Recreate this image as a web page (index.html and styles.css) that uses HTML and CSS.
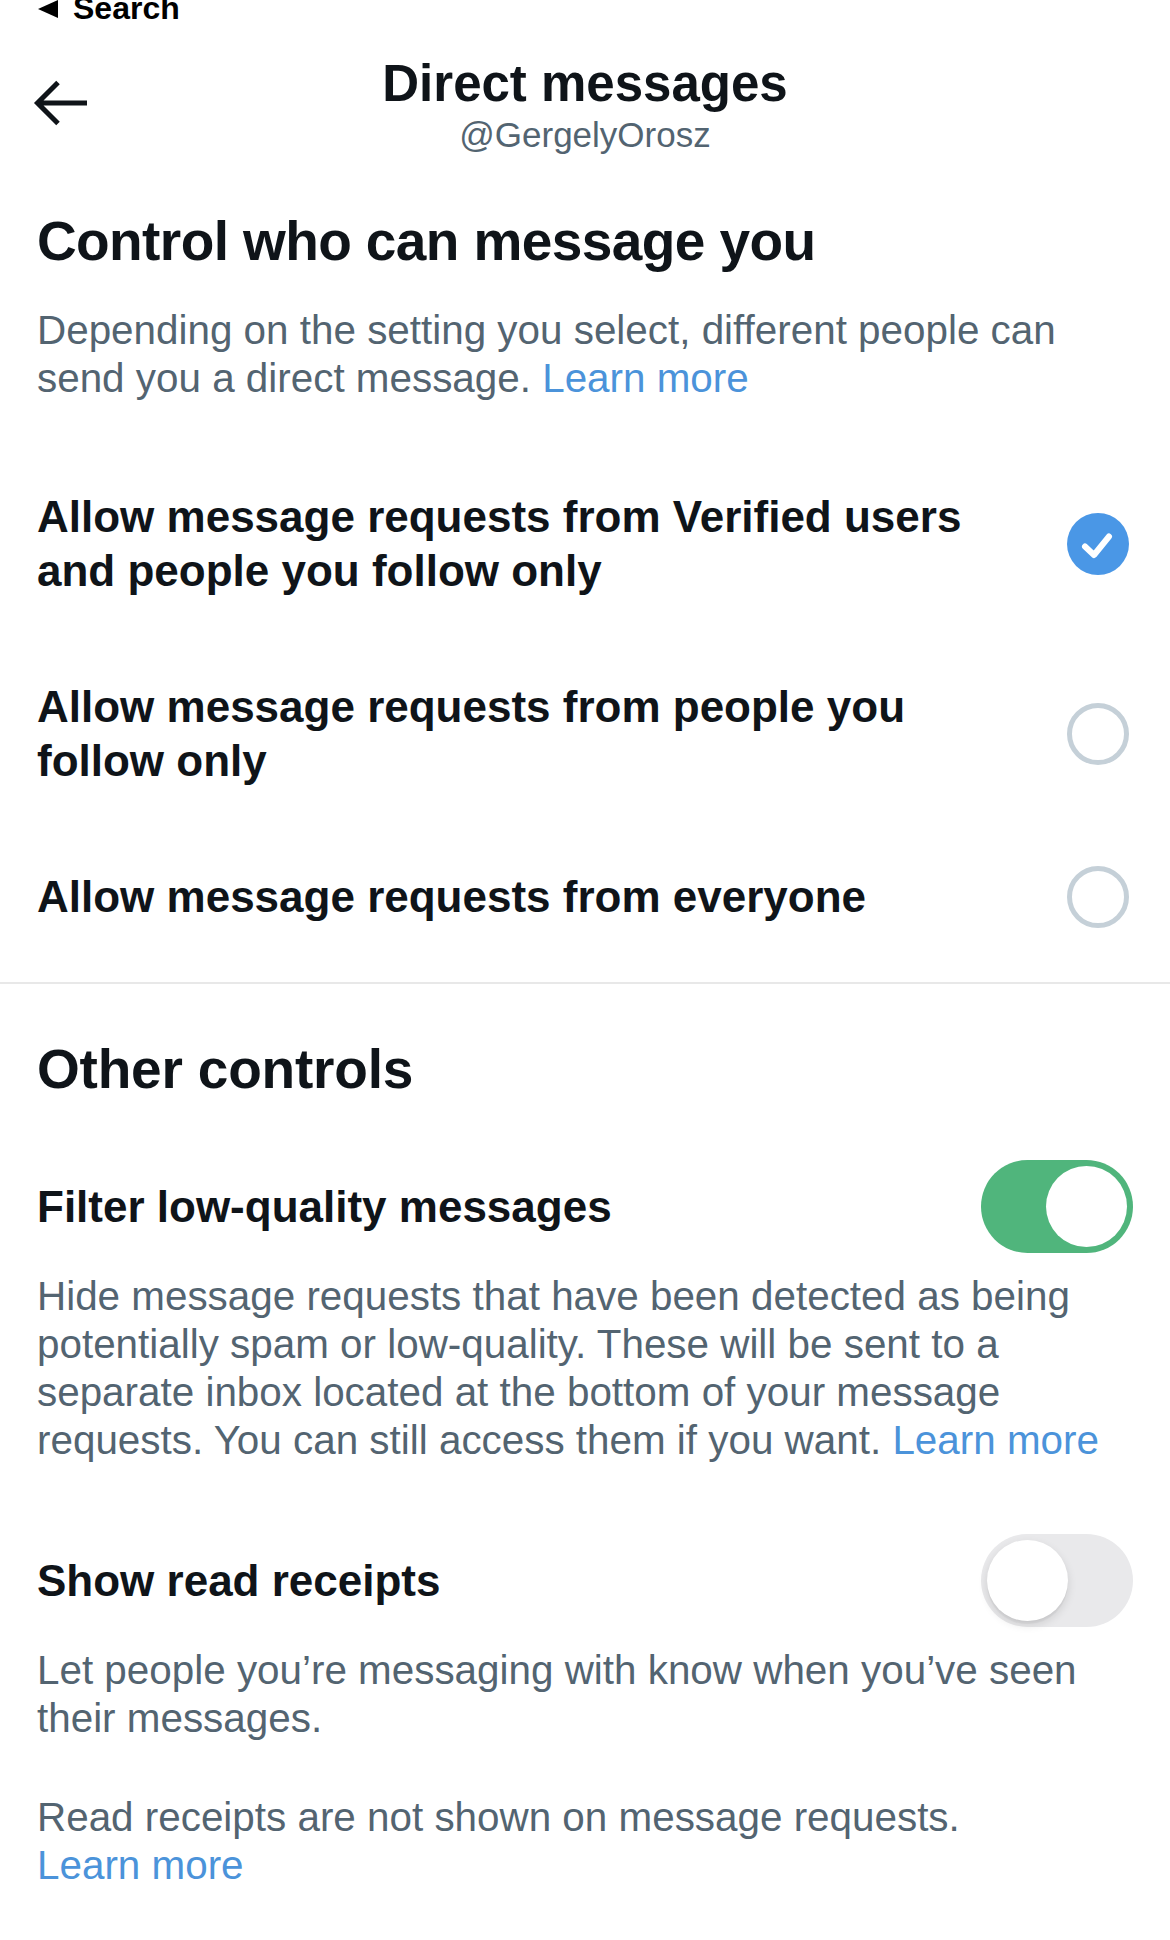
FILE: index.html
```
<!DOCTYPE html>
<html lang="en">
<head>
<meta charset="utf-8">
<title>Direct messages</title>
<link rel="stylesheet" href="styles.css">
</head>
<body>
<div class="statusbar">
  <svg class="sb-back" width="22" height="18" viewBox="0 0 22 18"><path d="M1 9 L21 0 L21 18 Z" fill="#000"/></svg>
  <span class="sb-label">Search</span>
</div>
<header class="nav">
  <div class="nav-left">
    <svg class="back-arrow" width="56" height="48" viewBox="0 0 56 48"><path d="M54 24 H5 M25 3.5 L4.5 24 L25 44.5" fill="none" stroke="#0f1419" stroke-width="5" stroke-linejoin="miter"/></svg>
  </div>
  <div class="nav-center">
    <h1 class="nav-title">Direct messages</h1>
    <div class="nav-handle">@GergelyOrosz</div>
  </div>
  <div class="nav-right"></div>
</header>
<main>
  <section class="group">
    <h2 class="section-title">Control who can message you</h2>
    <p class="desc desc--intro">Depending on the setting you select, different people can send you a direct message. <a class="link">Learn more</a></p>
  </section>
  <ul class="options">
    <li class="option">
      <span class="option-label">Allow message requests from Verified users and people you follow only</span>
      <svg class="radio" width="62" height="62" viewBox="0 0 62 62"><circle cx="31" cy="31" r="31" fill="#4a97e6"/><path d="M18 33.5 L27 42 L42 23.5" fill="none" stroke="#fff" stroke-width="6" stroke-linecap="round" stroke-linejoin="round"/></svg>
    </li>
    <li class="option">
      <span class="option-label">Allow message requests from people you follow only</span>
      <svg class="radio" width="62" height="62" viewBox="0 0 62 62"><circle cx="31" cy="31" r="28.5" fill="none" stroke="#c5d0d8" stroke-width="5"/></svg>
    </li>
    <li class="option option--last">
      <span class="option-label">Allow message requests from everyone</span>
      <svg class="radio" width="62" height="62" viewBox="0 0 62 62"><circle cx="31" cy="31" r="28.5" fill="none" stroke="#c5d0d8" stroke-width="5"/></svg>
    </li>
  </ul>
  <hr class="divider">
  <section class="group">
    <h2 class="section-title section-title--other">Other controls</h2>
    <div class="setting-row setting-row--first">
      <span class="setting-label">Filter low-quality messages</span>
      <span class="switch switch--on"><span class="knob"></span></span>
    </div>
    <p class="desc desc--after-row">Hide message requests that have been detected as being potentially spam or low-quality. These will be sent to a separate inbox located at the bottom of your message requests. You can still access them if you want. <a class="link">Learn more</a></p>
    <div class="setting-row setting-row--second">
      <span class="setting-label">Show read receipts</span>
      <span class="switch switch--off"><span class="knob"></span></span>
    </div>
    <p class="desc desc--after-row">Let people you’re messaging with know when you’ve seen their messages.</p>
    <p class="desc desc--note">Read receipts are not shown on message requests. <a class="link">Learn more</a></p>
  </section>
</main>
</body>
</html>
```
FILE: styles.css
```
* { box-sizing: border-box; }
html, body { margin: 0; padding: 0; background: #fff; }
body {
  width: 1170px;
  min-height: 1940px;
  font-family: "Liberation Sans", Arial, sans-serif;
  color: #0f1419;
}
.statusbar {
  display: flex;
  align-items: flex-start;
  height: 16px;
  padding-left: 37px;
  gap: 14px;
}
.sb-back { display: block; margin-top: 0; flex: none; }
.sb-label {
  font-size: 32px;
  line-height: 16px;
  font-weight: 700;
  color: #000;
}
.nav {
  display: grid;
  grid-template-columns: 1fr auto 1fr;
  padding-top: 39px;
}
.nav-left { padding-left: 33px; }
.back-arrow { display: block; margin-top: 24px; }
.nav-center { text-align: center; }
.nav-title {
  margin: 0;
  font-size: 51px;
  line-height: 57px;
  font-weight: 700;
  color: #0f1419;
}
.nav-handle {
  margin-top: 1px;
  font-size: 35px;
  line-height: 44px;
  color: #536471;
}
.group { padding: 0 37px; }
.section-title {
  margin: 53px 0 0;
  font-size: 55px;
  line-height: 62px;
  font-weight: 700;
  letter-spacing: -0.6px;
}
.section-title--other { margin-top: 54px; letter-spacing: -0.2px; }
.desc {
  margin: 0;
  font-size: 40.4px;
  line-height: 48px;
  color: #536471;
}
.desc--intro { margin-top: 34px; }
.desc--after-row { margin-top: 19px; }
.desc--note { margin-top: 51px; }
.link { color: #4b93da; white-space: nowrap; text-decoration: none; }
.options {
  list-style: none;
  margin: 47px 0 0;
  padding: 0;
}
.option {
  display: flex;
  align-items: center;
  justify-content: space-between;
  padding: 41px 37px;
}
.option--last { padding-top: 37px; padding-bottom: 36px; }
.option-label {
  flex: 0 1 980px;
  font-size: 44px;
  line-height: 54px;
  font-weight: 700;
}
.radio { display: block; flex: none; margin-right: 4px; }
.divider {
  margin: 18px 0 0;
  border: 0;
  height: 2px;
  background: #e8e8e8;
}
.setting-row {
  display: flex;
  align-items: center;
  justify-content: space-between;
}
.setting-row--first { margin-top: 60px; }
.setting-row--second { margin-top: 70px; }
.setting-label {
  font-size: 44px;
  line-height: 54px;
  font-weight: 700;
}
.switch {
  position: relative;
  display: block;
  flex: none;
  width: 152px;
  height: 93px;
  border-radius: 47px;
}
.switch--on { background: #50b57c; }
.switch--off { background: #e9e9eb; }
.knob {
  position: absolute;
  top: 6px;
  width: 81px;
  height: 81px;
  border-radius: 50%;
  background: #fff;
}
.switch--on .knob { right: 6px; }
.switch--off .knob {
  left: 6px;
  box-shadow: 0 4px 10px rgba(0,0,0,0.12), 0 3px 1px rgba(0,0,0,0.04);
}
```
